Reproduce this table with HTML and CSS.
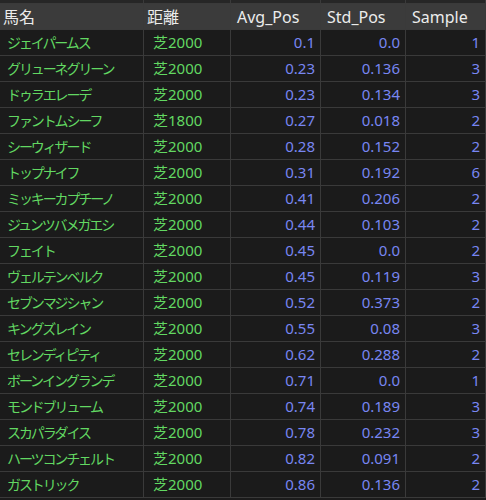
FILE: index.html
```html
<!DOCTYPE html>
<html lang="ja">
<head>
<meta charset="utf-8">
<link rel="stylesheet" href="styles.css">
</head>
<body>
<div class="grid">
  <div class="strip"></div><div class="strip"></div><div class="strip"></div><div class="strip"></div><div class="strip"></div>
  <div class="hd hd-jp">馬名</div><div class="hd hd-jp">距離</div><div class="hd">Avg_Pos</div><div class="hd">Std_Pos</div><div class="hd">Sample</div>

  <div class="name">ジェイパームス</div><div class="dist">芝2000</div><div class="num">0.1</div><div class="num">0.0</div><div class="num">1</div>
  <div class="name">グリューネグリーン</div><div class="dist">芝2000</div><div class="num">0.23</div><div class="num">0.136</div><div class="num">3</div>
  <div class="name">ドゥラエレーデ</div><div class="dist">芝2000</div><div class="num">0.23</div><div class="num">0.134</div><div class="num">3</div>
  <div class="name">ファントムシーフ</div><div class="dist">芝1800</div><div class="num">0.27</div><div class="num">0.018</div><div class="num">2</div>
  <div class="name">シーウィザード</div><div class="dist">芝2000</div><div class="num">0.28</div><div class="num">0.152</div><div class="num">2</div>
  <div class="name">トップナイフ</div><div class="dist">芝2000</div><div class="num">0.31</div><div class="num">0.192</div><div class="num">6</div>
  <div class="name">ミッキーカプチーノ</div><div class="dist">芝2000</div><div class="num">0.41</div><div class="num">0.206</div><div class="num">2</div>
  <div class="name">ジュンツバメガエシ</div><div class="dist">芝2000</div><div class="num">0.44</div><div class="num">0.103</div><div class="num">2</div>
  <div class="name">フェイト</div><div class="dist">芝2000</div><div class="num">0.45</div><div class="num">0.0</div><div class="num">2</div>
  <div class="name">ヴェルテンベルク</div><div class="dist">芝2000</div><div class="num">0.45</div><div class="num">0.119</div><div class="num">3</div>
  <div class="name">セブンマジシャン</div><div class="dist">芝2000</div><div class="num">0.52</div><div class="num">0.373</div><div class="num">2</div>
  <div class="name">キングズレイン</div><div class="dist">芝2000</div><div class="num">0.55</div><div class="num">0.08</div><div class="num">3</div>
  <div class="name">セレンディピティ</div><div class="dist">芝2000</div><div class="num">0.62</div><div class="num">0.288</div><div class="num">2</div>
  <div class="name">ボーンイングランデ</div><div class="dist">芝2000</div><div class="num">0.71</div><div class="num">0.0</div><div class="num">1</div>
  <div class="name">モンドブリューム</div><div class="dist">芝2000</div><div class="num">0.74</div><div class="num">0.189</div><div class="num">3</div>
  <div class="name">スカパラダイス</div><div class="dist">芝2000</div><div class="num">0.78</div><div class="num">0.232</div><div class="num">3</div>
  <div class="name">ハーツコンチェルト</div><div class="dist">芝2000</div><div class="num">0.82</div><div class="num">0.091</div><div class="num">2</div>
  <div class="name">ガストリック</div><div class="dist">芝2000</div><div class="num">0.86</div><div class="num">0.136</div><div class="num">2</div>
</div>
</body>
</html>
```
FILE: styles.css
```css
html, body {
  margin: 0;
  padding: 0;
  background: #1b1b1b;
}
body {
  width: 486px;
  height: 500px;
  overflow: hidden;
  font-family: "Noto Sans", "Noto Sans CJK JP", sans-serif;
  font-size: 15px;
}
.grid {
  display: grid;
  grid-template-columns: 143px 86px 89px 84px 79px;
  grid-template-rows: 3px 25px repeat(18, 25px);
  gap: 1px;
  background: #3a3a3a;
  width: 485px;
  padding-right: 1px;
  padding-bottom: 1px;
}
.grid > div {
  background: #1b1b1b;
  display: flex;
  align-items: center;
  white-space: nowrap;
  overflow: hidden;
  line-height: 1;
}
.grid > .strip {
  background: #262626;
}
.grid > .hd {
  background: #3b3b3b;
  color: #ececec;
  padding-left: 6px;
  font-size: 16px;
}
.grid > .hd-jp {
  padding-left: 3px;
}
.grid > .name {
  color: #62d862;
  padding-left: 7px;
  font-size: 14px;
  letter-spacing: -2.1px;
}
.grid > .dist {
  color: #62d862;
  padding-left: 9px;
}
.grid > .num {
  color: #7886f2;
  justify-content: flex-end;
  padding-right: 5px;
}
```
